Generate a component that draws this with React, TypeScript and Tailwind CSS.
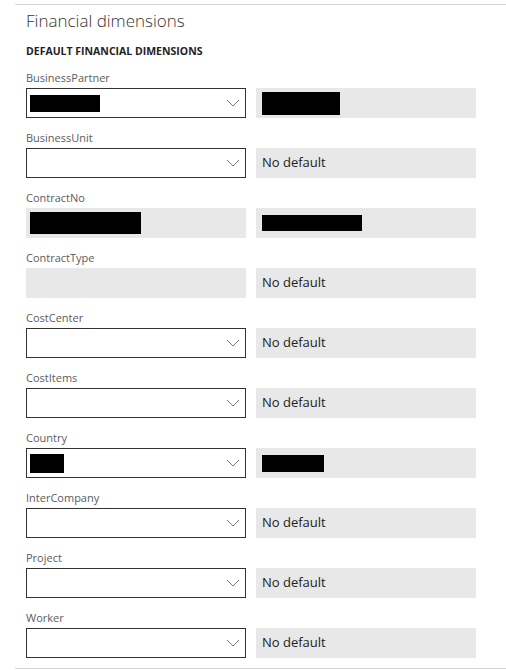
import React from "react";

type Dim = {
  name: string;
  lookup: boolean; // left field is a combo box with a chevron
  left?: number; // width of redacted block in left field
  right?: number; // width of redacted block in right field
  leftH?: number;
  rightH?: number;
};

const dims: Dim[] = [
  { name: "BusinessPartner", lookup: true, left: 70, right: 78, leftH: 17, rightH: 23 },
  { name: "BusinessUnit", lookup: true },
  { name: "ContractNo", lookup: false, left: 111, right: 100, leftH: 22, rightH: 16 },
  { name: "ContractType", lookup: false },
  { name: "CostCenter", lookup: true },
  { name: "CostItems", lookup: true },
  { name: "Country", lookup: true, left: 34, right: 62, leftH: 19, rightH: 17 },
  { name: "InterCompany", lookup: true },
  { name: "Project", lookup: true },
  { name: "Worker", lookup: true },
];

function Chevron() {
  return (
    <svg width="14" height="8" viewBox="0 0 14 8" className="shrink-0">
      <polyline points="1,1 7,7 13,1" fill="none" stroke="#7a7a7a" strokeWidth="1" />
    </svg>
  );
}

function Redacted({ w, h }: { w: number; h: number }) {
  return <div className="bg-black" style={{ width: w, height: h }} />;
}

function DimRow({ dim }: { dim: Dim }) {
  return (
    <div>
      <div className="h-[30px] pt-[12px] text-[11px] leading-[16px] text-[#5c5c5c]">{dim.name}</div>
      <div className="flex gap-[10px]">
        {dim.lookup ? (
          <div className="flex h-[30px] w-[220px] items-center justify-between border border-[#333] bg-white pl-[3px] pr-[5px]">
            {dim.left ? <Redacted w={dim.left} h={dim.leftH ?? 18} /> : <span />}
            <Chevron />
          </div>
        ) : (
          <div className="flex h-[30px] w-[220px] items-center bg-[#e8e8e8] pl-[4px]">
            {dim.left ? <Redacted w={dim.left} h={dim.leftH ?? 18} /> : null}
          </div>
        )}
        <div className="flex h-[30px] w-[220px] items-center bg-[#e8e8e8] pl-[6px] text-[13px] text-[#222]">
          {dim.right ? <Redacted w={dim.right} h={dim.rightH ?? 18} /> : <span>No default</span>}
        </div>
      </div>
    </div>
  );
}

export default function App() {
  return (
    <div className="h-[670px] w-[506px] bg-white pt-[4px] font-['Open_Sans','Noto_Sans',sans-serif]">
      <div className="ml-[15px] border-t border-b border-[#d4d4d4] pb-[10px] pl-[11px]">
        {/* Header */}
        <h2 className="mt-[4px] text-[17px] font-light leading-[24px] text-[#333]">Financial dimensions</h2>
        <h4 className="mt-[12px] text-[10.5px] font-bold uppercase leading-[13px] text-[#222]">
          Default financial dimensions
        </h4>

        {/* Dimension fields */}
        <div>
          {dims.map((d) => (
            <DimRow key={d.name} dim={d} />
          ))}
        </div>
      </div>
    </div>
  );
}
